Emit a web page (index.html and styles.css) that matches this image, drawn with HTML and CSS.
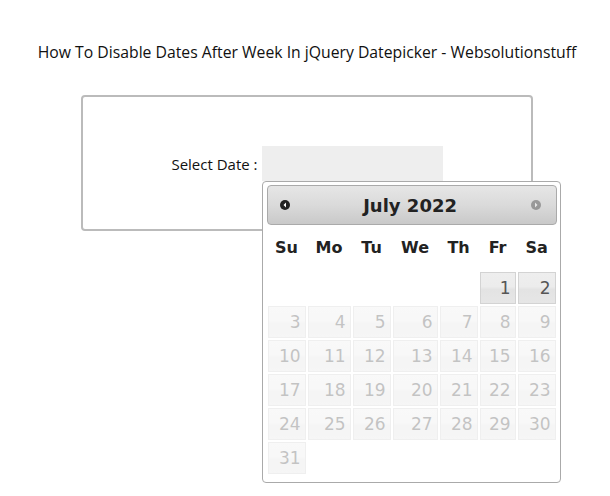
FILE: index.html
```html
<!DOCTYPE html>
<html lang="en">
<head>
<meta charset="utf-8">
<title>Datepicker</title>
<link rel="stylesheet" href="styles.css">
</head>
<body>
<div class="page">
  <h3 class="title">How To Disable Dates After Week In jQuery Datepicker - Websolutionstuff</h3>
  <div class="card">
    <div class="field">
      <label class="label" for="date">Select Date :</label>
      <div class="input-wrap">
        <input class="date-input" id="date" type="text">
        <div class="datepicker">
          <div class="dp-header">
            <span class="dp-nav dp-prev">
              <svg width="10" height="10" viewBox="0 0 10 10"><circle cx="5" cy="5" r="5" fill="#222"/><path d="M6 2.5 L3.5 5 L6 7.5 Z" fill="#fff"/></svg>
            </span>
            <span class="dp-title">July 2022</span>
            <span class="dp-nav dp-next">
              <svg width="10" height="10" viewBox="0 0 10 10"><circle cx="5" cy="5" r="5" fill="#222"/><path d="M4 2.5 L6.5 5 L4 7.5 Z" fill="#fff"/></svg>
            </span>
          </div>
          <div class="dp-grid">
            <span class="dow">Su</span><span class="dow">Mo</span><span class="dow">Tu</span><span class="dow">We</span><span class="dow">Th</span><span class="dow">Fr</span><span class="dow">Sa</span>
            <span class="empty"></span><span class="empty"></span><span class="empty"></span><span class="empty"></span><span class="empty"></span>
            <span class="day">1</span><span class="day">2</span>
            <span class="day off">3</span><span class="day off">4</span><span class="day off">5</span><span class="day off">6</span><span class="day off">7</span><span class="day off">8</span><span class="day off">9</span>
            <span class="day off">10</span><span class="day off">11</span><span class="day off">12</span><span class="day off">13</span><span class="day off">14</span><span class="day off">15</span><span class="day off">16</span>
            <span class="day off">17</span><span class="day off">18</span><span class="day off">19</span><span class="day off">20</span><span class="day off">21</span><span class="day off">22</span><span class="day off">23</span>
            <span class="day off">24</span><span class="day off">25</span><span class="day off">26</span><span class="day off">27</span><span class="day off">28</span><span class="day off">29</span><span class="day off">30</span>
            <span class="day off">31</span>
          </div>
        </div>
      </div>
    </div>
  </div>
</div>
</body>
</html>
```
FILE: styles.css
```css
html, body {
  margin: 0;
  padding: 0;
  background: #fff;
}
body {
  font-family: "Open Sans", "Noto Sans", sans-serif;
  color: #212529;
}
.page {
  padding-left: 4px;
  min-height: 496px;
  box-sizing: border-box;
}
.title {
  margin: 0;
  padding-top: 42px;
  font-size: 15.75px;
  line-height: 20px;
  font-weight: 400;
  text-align: center;
  color: #111;
}
.card {
  box-sizing: border-box;
  width: 452px;
  height: 136px;
  margin: 33px auto 0;
  border: 2px solid #bbb;
  border-radius: 4px;
  padding-top: 49px;
}
.field {
  display: flex;
  justify-content: center;
  align-items: center;
  gap: 4px;
}
.label {
  font-size: 15px;
  line-height: 20px;
  color: #111;
}
.input-wrap {
  position: relative;
}
.date-input {
  display: block;
  box-sizing: border-box;
  width: 181px;
  height: 35px;
  margin: 0;
  border: none;
  background: #eee;
  outline: none;
}
.datepicker {
  position: absolute;
  left: 0;
  top: 100%;
  z-index: 5;
  width: 290px;
  padding: 3px 3px 8px 4px;
  border: 1px solid #aaa;
  border-radius: 4px;
  background: #fff;
  font-family: "DejaVu Sans", Verdana, sans-serif;
  color: #222;
}
.dp-header {
  box-sizing: border-box;
  height: 40px;
  border: 1px solid #aaa;
  border-radius: 4px;
  background: linear-gradient(to bottom, #e6e6e6 0%, #dadada 50%, #c9c9c9 100%);
  display: flex;
  align-items: center;
  justify-content: space-between;
  padding: 0 15px 0 12px;
}
.dp-nav {
  display: flex;
  width: 10px;
  height: 10px;
}
.dp-next {
  opacity: .35;
}
.dp-title {
  font-size: 18px;
  font-weight: 700;
  color: #222;
}
.dp-grid {
  display: grid;
  grid-template-columns: 38px 43px 38px 45px 38px 36px 38px;
  grid-template-rows: 45px repeat(6, 32px);
  column-gap: 2px;
  row-gap: 2px;
  margin-left: 1px;
}
.dow {
  display: flex;
  align-items: center;
  justify-content: center;
  font-size: 16px;
  font-weight: 700;
  color: #222;
}
.day {
  box-sizing: border-box;
  display: flex;
  align-items: center;
  justify-content: flex-end;
  padding-right: 4px;
  border: 1px solid #d3d3d3;
  background: linear-gradient(to bottom, #eeeeee 0%, #ececec 45%, #e3e3e3 55%, #e6e6e6 100%);
  font-size: 17px;
  color: #555;
}
.day.off {
  opacity: .35;
}
```
